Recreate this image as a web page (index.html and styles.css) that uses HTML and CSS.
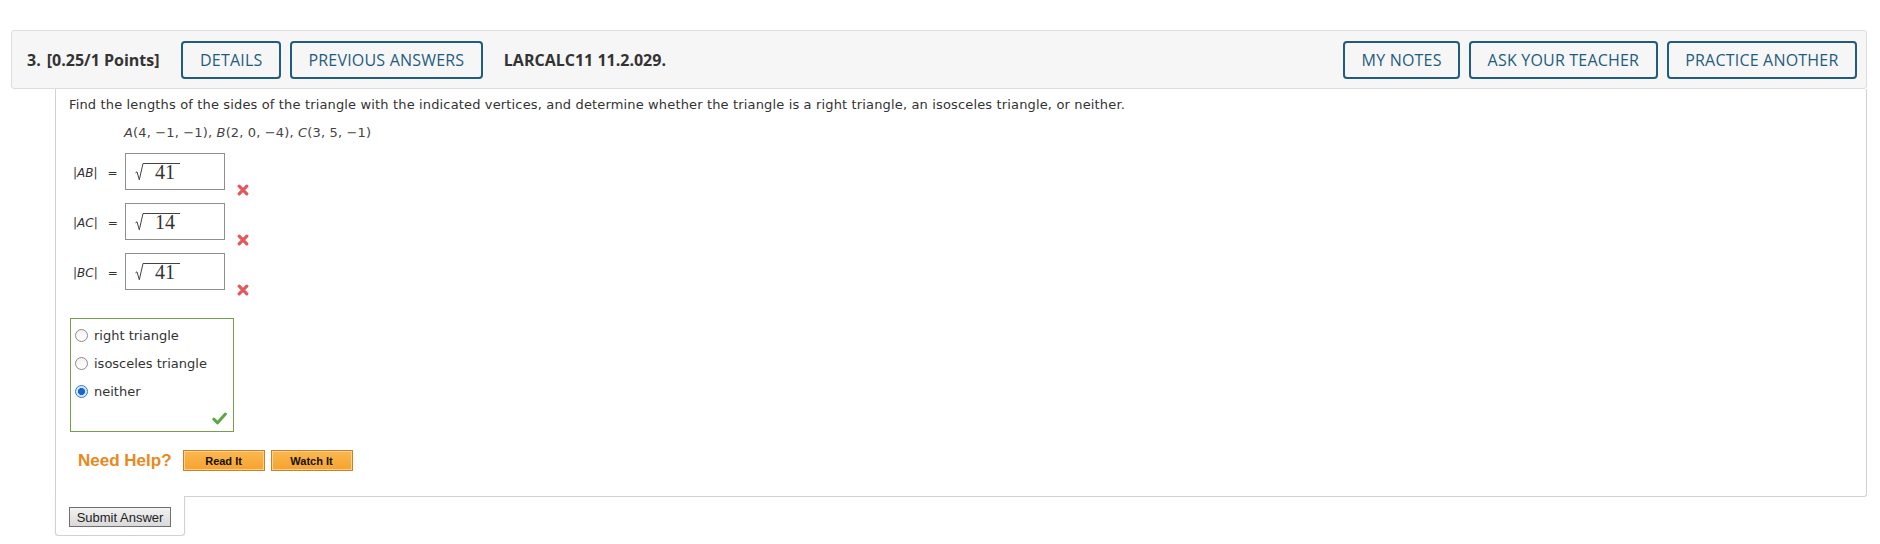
FILE: index.html
```html
<!DOCTYPE html>
<html>
<head>
<meta charset="utf-8">
<link rel="stylesheet" href="styles.css">
</head>
<body>
<div class="page">
  <div class="qhead">
    <span class="qnum">3.</span>
    <span class="qpts">[0.25/1 Points]</span>
    <div class="btn-group left">
      <button class="hbtn">DETAILS</button>
      <button class="hbtn">PREVIOUS ANSWERS</button>
    </div>
    <span class="qcode">LARCALC11 11.2.029.</span>
    <div class="btn-group right">
      <button class="hbtn">MY NOTES</button>
      <button class="hbtn">ASK YOUR TEACHER</button>
      <button class="hbtn">PRACTICE ANOTHER</button>
    </div>
  </div>

  <div class="qbody">
    <p class="prompt">Find the lengths of the sides of the triangle with the indicated vertices, and determine whether the triangle is a right triangle, an isosceles triangle, or neither.</p>
    <p class="verts"><i>A</i>(4, −1, −1), <i>B</i>(2, 0, −4), <i>C</i>(3, 5, −1)</p>

    <div class="answers">
      <div class="arow">
        <span class="alabel">|<i>AB</i>|<span class="eq">=</span></span>
        <span class="abox">
          <svg class="rad" width="9" height="18" viewBox="0 0 9 18"><path d="M0.5 9.8 L2 8.8 L4.3 16.8 L8 0.5 L9 0.5" fill="none" stroke="#444" stroke-width="1"/></svg>
          <span class="radicand">41</span>
        </span>
        <svg class="xmark" width="12" height="12" viewBox="0 0 12 12"><path d="M2.2 2.2 L9.8 9.8 M9.8 2.2 L2.2 9.8" stroke="#e2585e" stroke-width="3.2" stroke-linecap="round"/></svg>
      </div>
      <div class="arow">
        <span class="alabel">|<i>AC</i>|<span class="eq">=</span></span>
        <span class="abox">
          <svg class="rad" width="9" height="18" viewBox="0 0 9 18"><path d="M0.5 9.8 L2 8.8 L4.3 16.8 L8 0.5 L9 0.5" fill="none" stroke="#444" stroke-width="1"/></svg>
          <span class="radicand">14</span>
        </span>
        <svg class="xmark" width="12" height="12" viewBox="0 0 12 12"><path d="M2.2 2.2 L9.8 9.8 M9.8 2.2 L2.2 9.8" stroke="#e2585e" stroke-width="3.2" stroke-linecap="round"/></svg>
      </div>
      <div class="arow">
        <span class="alabel">|<i>BC</i>|<span class="eq">=</span></span>
        <span class="abox">
          <svg class="rad" width="9" height="18" viewBox="0 0 9 18"><path d="M0.5 9.8 L2 8.8 L4.3 16.8 L8 0.5 L9 0.5" fill="none" stroke="#444" stroke-width="1"/></svg>
          <span class="radicand">41</span>
        </span>
        <svg class="xmark" width="12" height="12" viewBox="0 0 12 12"><path d="M2.2 2.2 L9.8 9.8 M9.8 2.2 L2.2 9.8" stroke="#e2585e" stroke-width="3.2" stroke-linecap="round"/></svg>
      </div>
    </div>

    <div class="choices">
      <label class="opt"><input type="radio" name="tri"> right triangle</label>
      <label class="opt"><input type="radio" name="tri"> isosceles triangle</label>
      <label class="opt"><input type="radio" name="tri" checked> neither</label>
      <div class="checkrow">
        <svg width="15" height="13" viewBox="0 0 15 13"><path d="M1.8 7.2 L5.6 10.8 L13.4 2" fill="none" stroke="#5ea546" stroke-width="3" stroke-linecap="round" stroke-linejoin="round"/></svg>
      </div>
    </div>

    <div class="help">
      <span class="help-label">Need Help?</span>
      <button class="hlp">Read It</button>
      <button class="hlp">Watch It</button>
    </div>
  </div>

  <div class="submit-tab">
    <button class="submit">Submit Answer</button>
  </div>
</div>
</body>
</html>
```

FILE: styles.css
```css
html, body {
  margin: 0;
  padding: 0;
  background: #ffffff;
}

body {
  font-family: "DejaVu Sans", Verdana, sans-serif;
  color: #333333;
}

.page {
  padding: 30px 13px 0 11px;
}

/* ---------- header ---------- */
.qhead {
  display: flex;
  align-items: center;
  height: 59px;
  box-sizing: border-box;
  padding: 0 9px 0 15px;
  background: #f6f6f6;
  border: 1px solid #dddddd;
  border-radius: 3px;
  font-family: "Open Sans", sans-serif;
  color: #333333;
}

.qnum {
  font-size: 16px;
  font-weight: 700;
  margin-right: 6px;
}

.qpts {
  font-size: 16px;
  font-weight: 700;
}

.btn-group {
  display: flex;
  gap: 9px;
}

.btn-group.left {
  margin-left: 22px;
}

.btn-group.right {
  margin-left: auto;
}

.hbtn {
  height: 38px;
  padding: 0 16.5px;
  border: 2px solid #1f5c80;
  border-radius: 4px;
  background: transparent;
  color: #1f5c80;
  font-family: "Open Sans", sans-serif;
  font-size: 16px;
  font-weight: 400;
  letter-spacing: 0.2px;
  cursor: pointer;
}

.qcode {
  margin-left: 21px;
  font-size: 16px;
  font-weight: 700;
}

/* ---------- body ---------- */
.qbody {
  margin-left: 44px;
  padding: 8px 0 25px 13px;
  border: 1px solid #d2d2d2;
  border-top: 0;
  border-radius: 0 0 3px 0;
  font-size: 13px;
}

.prompt {
  margin: 0;
  line-height: 16px;
  letter-spacing: 0.15px;
}

.verts {
  margin: 12px 0 0 55px;
  line-height: 16px;
  color: #444;
  letter-spacing: 0.15px;
}

.verts i,
.alabel i {
  font-style: italic;
}

.answers {
  margin-top: 12px;
  padding-left: 4px;
  display: flex;
  flex-direction: column;
  gap: 13px;
}

.arow {
  display: flex;
  align-items: center;
}

.alabel {
  width: 52px;
  padding-top: 3px;
  color: #333;
  font-size: 12px;
}

.eq {
  margin-left: 10px;
}

.abox {
  display: flex;
  align-items: flex-start;
  padding: 9px 0 0 9px;
  box-sizing: content-box;
  border: 1px solid #8f8f8f;
  background: #fff;
  width: 89px;
  height: 26px;
}

.rad {
  display: block;
  flex: none;
}

.radicand {
  border-top: 1px solid #444;
  padding: 0 5px 0 11px;
  font-family: "Liberation Serif", "Times New Roman", serif;
  font-size: 20px;
  line-height: 16px;
  color: #333;
}

.xmark {
  display: block;
  align-self: flex-end;
  margin: 0 0 -6px 12px;
}

/* ---------- choices ---------- */
.choices {
  margin: 28px 0 0 1px;
  width: 162px;
  padding: 2px 0 0 0;
  border: 1px solid #74a04e;
}

.opt {
  display: flex;
  align-items: center;
  height: 28px;
  padding-left: 4px;
  gap: 6px;
  color: #333;
  font-size: 13px;
}

.opt input {
  appearance: none;
  -webkit-appearance: none;
  margin: 0;
  width: 13px;
  height: 13px;
  border-radius: 50%;
  border: 1px solid #8a8a8a;
  background: linear-gradient(#f2f2f2, #ffffff);
  box-sizing: border-box;
  flex: none;
}

.opt input:checked {
  border: 1px solid #2f76d2;
  background: radial-gradient(circle, #1767d0 0, #1767d0 3.2px, #d6e6fb 3.9px, #eef5fe 100%);
}

.checkrow {
  display: flex;
  justify-content: flex-end;
  padding: 7px 6px 6px 0;
}

.checkrow svg {
  display: block;
}

/* ---------- help ---------- */
.help {
  display: flex;
  align-items: center;
  margin-top: 18px;
  padding-left: 9px;
  height: 21px;
}

.help-label {
  font-family: "Liberation Sans", Arial, sans-serif;
  font-weight: 700;
  font-size: 17px;
  color: #e8891d;
  margin-right: 11px;
}

.hlp {
  width: 82px;
  height: 21px;
  margin: 0 6px 0 0;
  padding: 0;
  border: 1px solid #c9802a;
  box-shadow: inset 0 0 0 1px #fcd18e;
  background: linear-gradient(#fbb850, #f7a22e);
  font-family: "Liberation Sans", Arial, sans-serif;
  font-weight: 700;
  font-size: 11px;
  color: #111;
}

/* ---------- submit tab ---------- */
.submit-tab {
  margin: -1px 0 0 44px;
  padding: 11px 0 8px 13px;
  box-sizing: border-box;
  width: 130px;
  background: #fff;
  border: 1px solid #d2d2d2;
  border-top: 0;
  border-radius: 0 0 4px 4px;
  box-shadow: 0 1px 2px rgba(0, 0, 0, 0.08);
}

.submit {
  display: block;
  width: 102px;
  height: 20px;
  padding: 0;
  border: 1px solid #707070;
  border-radius: 0;
  background: linear-gradient(#f2f2f2, #d9d9d9);
  font-family: "Liberation Sans", Arial, sans-serif;
  font-size: 13px;
  color: #222;
}
```
